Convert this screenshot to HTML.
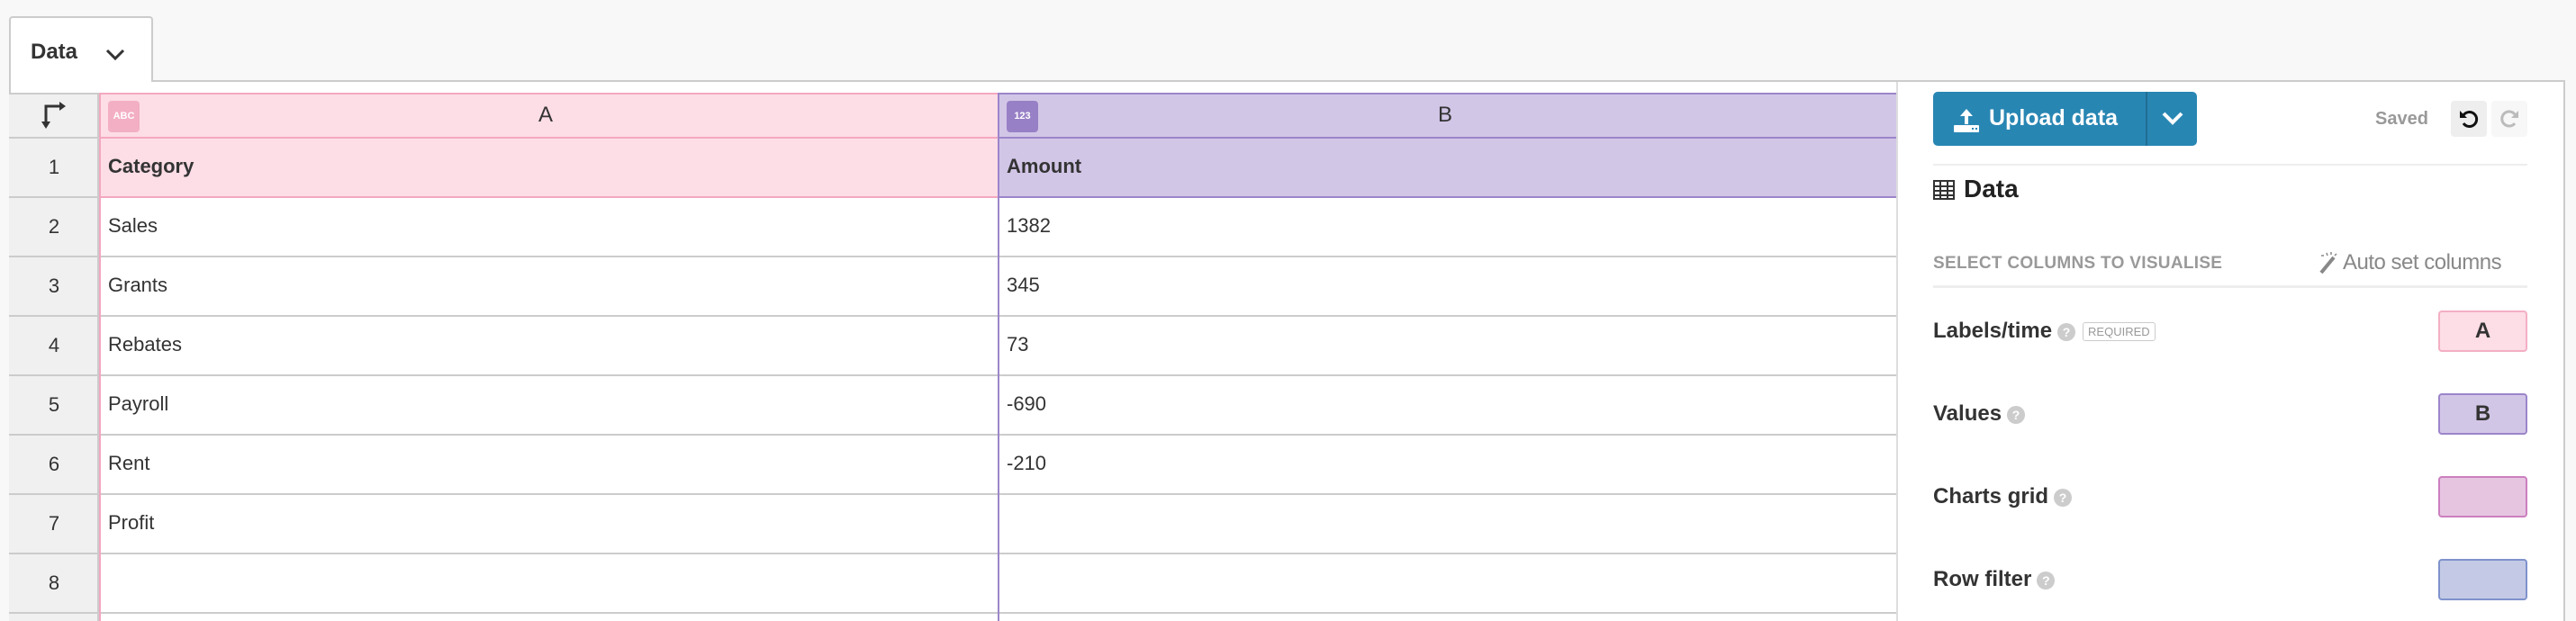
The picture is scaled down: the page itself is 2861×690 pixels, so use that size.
<!DOCTYPE html>
<html style="width:2861px;height:690px;overflow:hidden"><head><meta charset="utf-8"><style>
*{box-sizing:border-box;margin:0;padding:0}
body{width:2861px;height:690px;overflow:hidden;background:#f8f8f8;font-family:"Liberation Sans",sans-serif;color:#333;position:relative}
.a{position:absolute}
.tab{left:10px;top:18px;width:160px;height:73px;background:#fff;border:2px solid #ccc;border-bottom:none;border-radius:4px 4px 0 0;z-index:2}
.main{left:10px;top:89px;width:2839px;height:601px;background:#fff;border:2px solid #ccc;border-bottom:none}
.hl{height:2px;background:#ccc}
.rn{left:10px;width:100px;background:#f0f0f0;border-right:2px solid #ccc;font-size:22px;text-align:center;color:#333}
.cell{font-size:22px;color:#333}
.lbl{font-size:24px;font-weight:bold;color:#333}
.q{display:inline-block;width:20px;height:20px;border-radius:50%;background:#ccc;color:#fff;font-size:14px;text-align:center;line-height:20px;vertical-align:middle;margin-left:6px;font-weight:bold}
.box{left:2708px;width:99px;height:46px;border-radius:4px;font-size:24px;font-weight:bold;text-align:center;line-height:42px}
</style></head><body>
<div class="a main"></div>
<div class="a tab"><div class="a" style="left:22px;top:24px;font-size:24px;font-weight:bold;color:#333">Data</div>
<svg class="a" style="left:104px;top:33px" width="24" height="16" viewBox="0 0 24 16"><path d="M3 3l9 9 9-9" fill="none" stroke="#333" stroke-width="3"/></svg></div>

<div class="a" style="left:10px;top:103px;width:2096px;height:587px;background:#fff"></div>
<div class="a" style="left:110px;top:103px;width:998px;height:116px;background:#fddde6"></div>
<div class="a" style="left:1108px;top:103px;width:998px;height:116px;background:#d2c6e7"></div>
<div class="a rn" style="top:103px;height:587px"></div>
<div class="a" style="left:110px;top:103px;width:998px;height:2px;background:#f3a8c0"></div>
<div class="a" style="left:110px;top:152px;width:998px;height:2px;background:#f3a8c0"></div>
<div class="a" style="left:110px;top:218px;width:998px;height:2px;background:#f3a8c0"></div>
<div class="a" style="left:1108px;top:103px;width:998px;height:2px;background:#9c85ca"></div>
<div class="a" style="left:1108px;top:152px;width:998px;height:2px;background:#9c85ca"></div>
<div class="a" style="left:1108px;top:218px;width:998px;height:2px;background:#9c85ca"></div>
<div class="a" style="left:10px;top:103px;width:100px;height:2px;background:#ccc"></div>
<div class="a" style="left:10px;top:152px;width:100px;height:2px;background:#ccc"></div>
<div class="a" style="left:10px;top:218px;width:100px;height:2px;background:#ccc"></div>
<div class="a hl" style="left:10px;top:284px;width:2096px"></div>
<div class="a hl" style="left:10px;top:350px;width:2096px"></div>
<div class="a hl" style="left:10px;top:416px;width:2096px"></div>
<div class="a hl" style="left:10px;top:482px;width:2096px"></div>
<div class="a hl" style="left:10px;top:548px;width:2096px"></div>
<div class="a hl" style="left:10px;top:614px;width:2096px"></div>
<div class="a hl" style="left:10px;top:680px;width:2096px"></div>
<div class="a" style="left:110px;top:103px;width:2px;height:587px;background:#f3a8c0"></div>
<div class="a" style="left:1108px;top:103px;width:2px;height:587px;background:#9c85ca"></div>

<svg class="a" style="left:46px;top:113px" width="32" height="32" viewBox="0 0 32 32"><path d="M5 28V5h16" fill="none" stroke="#333" stroke-width="3"/><path d="M20 0l7 5-7 5z M0 22l5 8 5-8z" fill="#333"/></svg>
<div class="a" style="left:120px;top:112px;width:35px;height:35px;background:#f3afc4;border-radius:4px;color:#fff;font-size:11px;font-weight:bold;line-height:35px;text-align:center">ABC</div>
<div class="a" style="left:1118px;top:112px;width:35px;height:35px;background:#9880c6;border-radius:4px;color:#fff;font-size:11px;font-weight:bold;line-height:35px;text-align:center">123</div>
<div class="a cell" style="left:598px;top:114px;font-size:24px">A</div>
<div class="a cell" style="left:1597px;top:114px;font-size:24px">B</div>

<div class="a cell" style="left:120px;top:172px;font-weight:bold">Category</div>
<div class="a cell" style="left:1118px;top:172px;font-weight:bold">Amount</div>
<div class="a rn" style="top:154px;height:64px;line-height:64px;border:none;background:none">1</div>
<div class="a rn" style="top:220px;height:64px;line-height:64px;border:none;background:none">2</div>
<div class="a rn" style="top:286px;height:64px;line-height:64px;border:none;background:none">3</div>
<div class="a rn" style="top:352px;height:64px;line-height:64px;border:none;background:none">4</div>
<div class="a rn" style="top:418px;height:64px;line-height:64px;border:none;background:none">5</div>
<div class="a rn" style="top:484px;height:64px;line-height:64px;border:none;background:none">6</div>
<div class="a rn" style="top:550px;height:64px;line-height:64px;border:none;background:none">7</div>
<div class="a rn" style="top:616px;height:64px;line-height:64px;border:none;background:none">8</div>
<div class="a cell" style="left:120px;top:238px">Sales</div><div class="a cell" style="left:1118px;top:238px">1382</div>
<div class="a cell" style="left:120px;top:304px">Grants</div><div class="a cell" style="left:1118px;top:304px">345</div>
<div class="a cell" style="left:120px;top:370px">Rebates</div><div class="a cell" style="left:1118px;top:370px">73</div>
<div class="a cell" style="left:120px;top:436px">Payroll</div><div class="a cell" style="left:1118px;top:436px">-690</div>
<div class="a cell" style="left:120px;top:502px">Rent</div><div class="a cell" style="left:1118px;top:502px">-210</div>
<div class="a cell" style="left:120px;top:568px">Profit</div>

<div class="a" style="left:2106px;top:91px;width:2px;height:599px;background:#ddd"></div>
<div class="a" style="left:2147px;top:102px;width:293px;height:60px;background:#2886b3;border-radius:5px"></div>
<div class="a" style="left:2383px;top:102px;width:2px;height:60px;background:#1f6e94"></div>
<svg class="a" style="left:2170px;top:119px" width="28" height="28" viewBox="0 0 28 28"><path d="M14 2l-7 8h5v9h4v-9h5z" fill="#fff"/><rect x="0" y="20" width="28" height="8" rx="1" fill="#fff"/><rect x="20" y="23" width="2" height="2" fill="#2886b3"/><rect x="24" y="23" width="2" height="2" fill="#2886b3"/></svg>
<div class="a" style="left:2209px;top:117px;font-size:25px;font-weight:bold;color:#fff">Upload data</div>
<svg class="a" style="left:2400px;top:122px" width="26" height="20" viewBox="0 0 26 20"><path d="M3 4l10 10 10-10" fill="none" stroke="#fff" stroke-width="4"/></svg>
<div class="a" style="left:2638px;top:121px;font-size:20px;font-weight:bold;color:#999">Saved</div>
<div class="a" style="left:2722px;top:112px;width:40px;height:40px;background:#eee;border-radius:4px"></div>
<svg class="a" style="left:2730px;top:120px" width="24" height="24" viewBox="0 0 24 24"><path d="M6 8a8 8 0 1 1 0 9" fill="none" stroke="#111" stroke-width="3"/><path d="M2 3v8h8z" fill="#111"/></svg>
<div class="a" style="left:2767px;top:112px;width:40px;height:40px;background:#f7f7f7;border-radius:4px"></div>
<svg class="a" style="left:2775px;top:120px" width="24" height="24" viewBox="0 0 24 24"><path d="M18 7a8 8 0 1 0 0 10" fill="none" stroke="#bbb" stroke-width="3"/><path d="M22 3v8h-8z" fill="#bbb"/></svg>
<div class="a" style="left:2147px;top:182px;width:660px;height:2px;background:#eee"></div>
<svg class="a" style="left:2147px;top:200px" width="24" height="22" viewBox="0 0 24 22"><rect x="1" y="1" width="22" height="20" fill="none" stroke="#333" stroke-width="2"/><path d="M1 7h22M1 12h22M1 17h22M8 1v20M16 1v20" stroke="#333" stroke-width="2"/></svg>
<div class="a" style="left:2181px;top:194px;font-size:28px;font-weight:bold;color:#222">Data</div>
<div class="a" style="left:2147px;top:282px;font-size:19px;font-weight:bold;color:#999;letter-spacing:0.3px">SELECT COLUMNS TO VISUALISE</div>
<svg class="a" style="left:2575px;top:279px" width="24" height="26" viewBox="0 0 24 26"><path d="M3 24L17 7" stroke="#888" stroke-width="4"/><path d="M9 2l1 3M3 5h3M14 1v3M20 3l-2 2" stroke="#888" stroke-width="1.5"/></svg>
<div class="a" style="left:2602px;top:278px;font-size:24px;color:#888;letter-spacing:-0.5px">Auto set columns</div>
<div class="a" style="left:2147px;top:317px;width:660px;height:3px;background:#eee"></div>

<div class="a lbl" style="left:2147px;top:354px">Labels/time<span class="q">?</span><span style="display:inline-block;margin-left:8px;border:1px solid #ccc;border-radius:3px;font-size:13px;font-weight:normal;color:#999;padding:2px 5px;vertical-align:middle">REQUIRED</span></div>
<div class="a box" style="top:345px;background:#fddde6;border:2px solid #f3afc4">A</div>
<div class="a lbl" style="left:2147px;top:446px">Values<span class="q">?</span></div>
<div class="a box" style="top:437px;background:#d2c6e7;border:2px solid #9c85ca">B</div>
<div class="a lbl" style="left:2147px;top:538px">Charts grid<span class="q">?</span></div>
<div class="a box" style="top:529px;background:#e6c5e1;border:2px solid #cc7fbf"></div>
<div class="a lbl" style="left:2147px;top:630px">Row filter<span class="q">?</span></div>
<div class="a box" style="top:621px;background:#c4cae5;border:2px solid #7f92cc"></div>
</body></html>
